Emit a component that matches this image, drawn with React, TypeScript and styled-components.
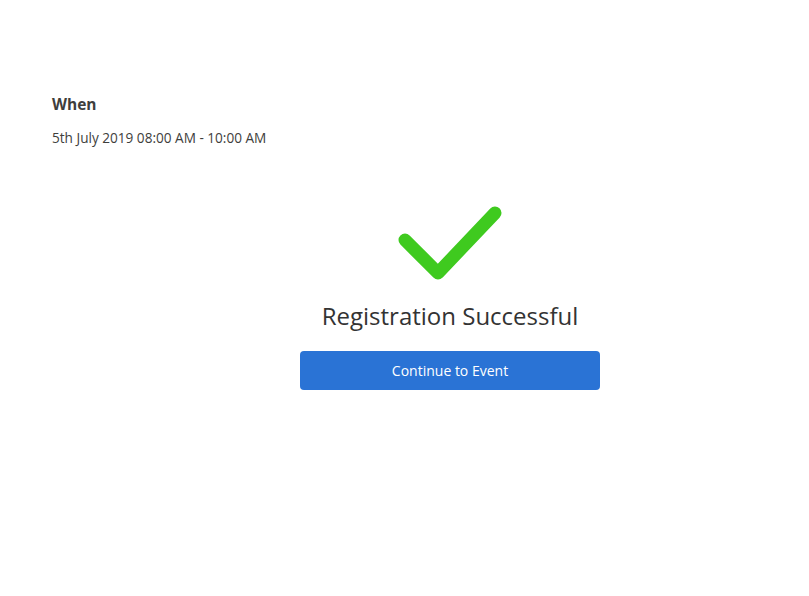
import styled, { createGlobalStyle } from "styled-components";

const GlobalStyle = createGlobalStyle`
  body {
    margin: 0;
    background: #ffffff;
    font-family: "Open Sans", "Noto Sans", sans-serif;
    color: #3e3e3c;
  }
`;

const Page = styled.div`
  padding: 94px 52px 0;
  min-height: 596px;
  box-sizing: border-box;
`;

const Details = styled.section`
  display: flex;
  flex-direction: column;
  gap: 15px;
`;

const Label = styled.h3`
  margin: 0;
  font-size: 15.5px;
  line-height: 20px;
  font-weight: 700;
  color: #3e3e3c;
`;

const Value = styled.p`
  margin: 0;
  font-size: 13.6px;
  line-height: 18px;
  color: #3e3e3c;
`;

const Success = styled.section`
  width: 300px;
  margin: 57px 0 0 248px;
  display: flex;
  flex-direction: column;
  align-items: center;
`;

const Title = styled.h2`
  margin: 14px 0 19px;
  font-size: 24px;
  line-height: 32px;
  font-weight: 400;
  color: #333333;
`;

const Button = styled.button`
  width: 300px;
  height: 39px;
  border: none;
  border-radius: 4px;
  background: #2a73d5;
  color: #ffffff;
  font-family: inherit;
  font-size: 14px;
  cursor: pointer;
`;

function CheckMark() {
  return (
    <svg width="110" height="82" viewBox="0 0 110 82">
      <polyline
        points="10,36 43,69 100,9"
        fill="none"
        stroke="#3fca1f"
        strokeWidth="13"
        strokeLinecap="round"
        strokeLinejoin="round"
      />
    </svg>
  );
}

export default function App() {
  return (
    <>
      <GlobalStyle />
      <Page>
        <Details>
          <Label>When</Label>
          <Value>5th July 2019 08:00 AM - 10:00 AM</Value>
        </Details>
        <Success>
          <CheckMark />
          <Title>Registration Successful</Title>
          <Button>Continue to Event</Button>
        </Success>
      </Page>
    </>
  );
}
